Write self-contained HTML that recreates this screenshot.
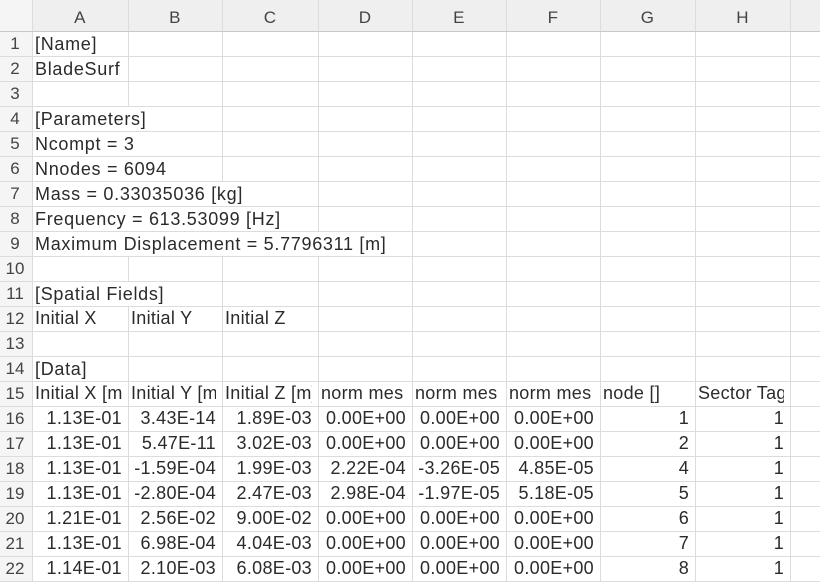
<!DOCTYPE html>
<html><head><meta charset="utf-8"><style>
body{margin:0;width:820px;height:581px;overflow:hidden;background:#fff;font-family:"Liberation Sans",sans-serif;font-size:18px;letter-spacing:0.3px;color:#2b2b2b}
.g{position:absolute;background:#dcdcdc}
.t{position:absolute;white-space:nowrap;overflow:hidden;line-height:25px;height:25px}
.h{position:absolute;text-align:center;color:#444;line-height:36px;top:0;font-size:17px}
.r{position:absolute;left:0;width:30px;text-align:center;color:#444;line-height:25px;font-size:17px;letter-spacing:0}
</style></head><body>
<div style="position:absolute;left:0;top:0;width:820px;height:31px;background:#efefef"></div>
<div style="position:absolute;left:0;top:0;width:32px;height:581px;background:#f5f5f5"></div>
<div id="c"></div>
<script>
var cols=[32,128,222,318,412,506,600,695,790,820];
var L="ABCDEFGH",h="";
for(var i=0;i<8;i++)h+='<div class="h" style="left:'+cols[i]+'px;width:'+(cols[i+1]-cols[i])+'px">'+L[i]+'</div>';
for(var i=0;i<9;i++)h+='<div class="g" style="left:'+cols[i]+'px;top:0;width:1px;height:581px"></div>';
h+='<div class="g" style="left:0;top:31px;width:820px;height:1px;background:#c8c8c8"></div>';
for(var r=1;r<=22;r++){var y=31+(r-1)*25;h+='<div class="g" style="left:0;top:'+(y+25)+'px;width:820px;height:1px"></div>';h+='<div class="r" style="top:'+y+'px">'+r+'</div>';}
var txt={1:"[Name]",2:"BladeSurf",4:"[Parameters]",5:"Ncompt = 3",6:"Nnodes = 6094",7:"Mass = 0.33035036 [kg]",8:"Frequency = 613.53099 [Hz]",9:"Maximum Displacement = 5.7796311 [m]",11:"[Spatial Fields]",14:"[Data]"};
for(var k in txt){var y=31+(k-1)*25;h+='<div class="t" style="left:35px;top:'+(y+1)+'px;height:24px;background:#fff;padding-right:4px;letter-spacing:0.7px">'+txt[k]+'</div>';}
function cell(c,r,s,right){var y=31+(r-1)*25,x=cols[c],w=cols[c+1]-cols[c];h+='<div class="t" style="left:'+(x+3)+'px;top:'+y+'px;width:'+(w-9)+'px;text-align:'+(right?'right':'left')+'">'+s+'</div>';}
cell(0,12,"Initial X");cell(1,12,"Initial Y");cell(2,12,"Initial Z");
var hd=["Initial X [m]","Initial Y [m]","Initial Z [m]","norm mes","norm mes","norm mes","node []","Sector Tag []"];
for(var i=0;i<8;i++)cell(i,15,hd[i],false);
var d=[["1.13E-01","3.43E-14","1.89E-03","0.00E+00","0.00E+00","0.00E+00","1","1"],
["1.13E-01","5.47E-11","3.02E-03","0.00E+00","0.00E+00","0.00E+00","2","1"],
["1.13E-01","-1.59E-04","1.99E-03","2.22E-04","-3.26E-05","4.85E-05","4","1"],
["1.13E-01","-2.80E-04","2.47E-03","2.98E-04","-1.97E-05","5.18E-05","5","1"],
["1.21E-01","2.56E-02","9.00E-02","0.00E+00","0.00E+00","0.00E+00","6","1"],
["1.13E-01","6.98E-04","4.04E-03","0.00E+00","0.00E+00","0.00E+00","7","1"],
["1.14E-01","2.10E-03","6.08E-03","0.00E+00","0.00E+00","0.00E+00","8","1"]];
for(var j=0;j<d.length;j++)for(var i=0;i<8;i++)cell(i,16+j,d[j][i],true);
document.getElementById("c").innerHTML=h;
</script>
</body></html>
